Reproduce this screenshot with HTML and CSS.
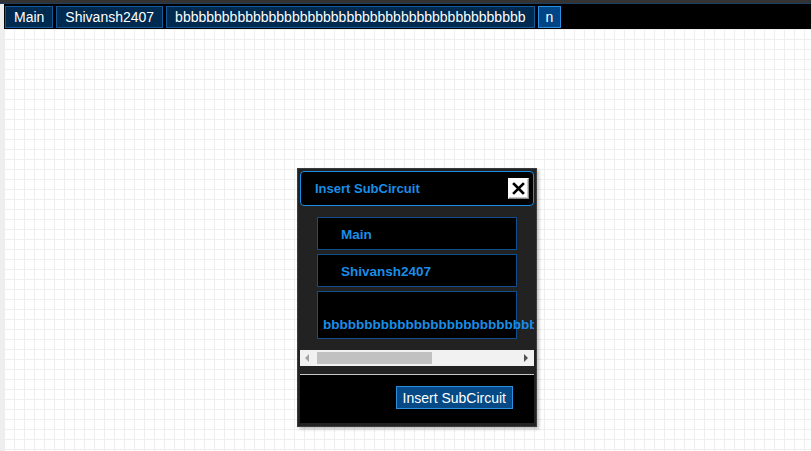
FILE: index.html
```html
<!DOCTYPE html>
<html lang="en">
<head>
  <meta charset="UTF-8" />
  <title>Insert SubCircuit</title>
  <link rel="stylesheet" href="styles.css">
</head>
<body>
  <div class="topline"></div>
  <div class="workspace">
    <div class="tabbar">
      <div class="tab">Main</div>
      <div class="tab">Shivansh2407</div>
      <div class="tab">bbbbbbbbbbbbbbbbbbbbbbbbbbbbbbbbbbbbbbbbbbbbb</div>
      <div class="tab tab-new">n</div>
    </div>
    <div class="canvas"></div>
  </div>

  <div class="dialog">
    <div class="dialog-header">
      <span class="dialog-title">Insert SubCircuit</span>
      <button class="close-btn" type="button">
        <svg width="13" height="13" viewBox="0 0 13 13">
          <path d="M2 2 L11 11 M11 2 L2 11" stroke="#000" stroke-width="2.6" stroke-linecap="square"/>
        </svg>
      </button>
    </div>
    <div class="dialog-body">
      <div class="circuit-list">
        <div class="circuit-item">Main</div>
        <div class="circuit-item">Shivansh2407</div>
        <div class="circuit-item circuit-item-long">bbbbbbbbbbbbbbbbbbbbbbbbbbbbbbbbbbbbbbbbbbbbb</div>
      </div>
    </div>
    <div class="hscroll">
      <span class="arrow arrow-left"></span>
      <span class="thumb"></span>
      <span class="arrow arrow-right"></span>
    </div>
    <div class="dialog-footer">
      <button class="insert-btn" type="button">Insert SubCircuit</button>
    </div>
  </div>
</body>
</html>
```

FILE: styles.css
```css
:root {
  --tab-bg: #002a50;
  --tab-border: #14599a;
  --accent: #1a8ee6;
  --accent-dark: #0e4f8f;
  --panel: #222;
}

html, body {
  margin: 0;
  height: 100%;
  overflow: hidden;
}

body {
  font-family: "Liberation Sans", Arial, sans-serif;
  background-color: #eee;
}

.topline {
  height: 3px;
  background-color: #333;
  border-bottom: 1px solid #1f3d5c;
}

.workspace {
  padding-left: 4px;
}

.tabbar {
  display: flex;
  gap: 3px;
  height: 25px;
  padding: 2px 0 0 1px;
  box-sizing: border-box;
  background-color: #000;
  overflow: hidden;
}

.tab {
  height: 22px;
  line-height: 20px;
  padding: 0 8px;
  box-sizing: border-box;
  background-color: var(--tab-bg);
  border: 1px solid var(--tab-border);
  color: #fff;
  font-size: 14px;
  white-space: nowrap;
}

.tab-new {
  padding: 0 7px;
  background-color: #004585;
  border-color: #2a8fe0;
}

.canvas {
  height: 430px;
  background-color: #fff;
  background-image:
    linear-gradient(to right, #eee 1px, transparent 1px),
    linear-gradient(to bottom, #eee 1px, transparent 1px);
  background-size: 10px 10px;
}

/* dialog */
.dialog {
  position: absolute;
  left: 297px;
  top: 168px;
  width: 234px;
  padding: 2px 2px 3px;
  background-color: var(--panel);
  border: 1px solid #3c3c3c;
  box-shadow: 2px 2px 3px rgba(0, 0, 0, 0.25);
}

.dialog-header {
  display: flex;
  align-items: center;
  justify-content: space-between;
  height: 35px;
  padding: 0 4px 0 14px;
  box-sizing: border-box;
  background-color: #000;
  border: 1px solid var(--accent);
  border-radius: 4px;
}

.dialog-title {
  color: var(--accent);
  font-size: 13px;
  font-weight: bold;
}

.close-btn {
  display: flex;
  align-items: center;
  justify-content: center;
  width: 21px;
  height: 21px;
  padding: 0;
  background-color: #fff;
  border: 1px solid;
  border-color: #fff #888 #888 #fff;
  box-shadow: inset -1px -1px 0 #ccc;
}

.dialog-body {
  height: 144px;
  padding-top: 11px;
  box-sizing: border-box;
  overflow: hidden;
}

.circuit-list {
  display: flex;
  flex-direction: column;
  gap: 4px;
  margin-left: 17px;
  width: 200px;
}

.circuit-item {
  height: 33px;
  line-height: 34px;
  padding-left: 23px;
  box-sizing: border-box;
  background-color: #000;
  border: 1px solid var(--accent-dark);
  color: var(--accent);
  font-size: 13.5px;
  font-weight: bold;
  white-space: nowrap;
}

.circuit-item-long {
  height: 48px;
  line-height: 16px;
  padding: 25px 0 0 5px;
}

.hscroll {
  display: flex;
  align-items: center;
  height: 16px;
  background-color: #f1f1f1;
}

.arrow {
  width: 0;
  height: 0;
  border-top: 4px solid transparent;
  border-bottom: 4px solid transparent;
}

.arrow-left {
  margin-left: 5px;
  border-right: 4px solid #a3a3a3;
}

.arrow-right {
  margin-left: auto;
  margin-right: 6px;
  border-left: 4px solid #505050;
}

.thumb {
  width: 115px;
  height: 12px;
  margin-left: 8px;
  background-color: #c1c1c1;
}

.dialog-footer {
  display: flex;
  justify-content: flex-end;
  height: 49px;
  margin-top: 8px;
  padding: 11px 21px 0 0;
  box-sizing: border-box;
  background-color: #000;
  border-top: 1px solid #c8c8c8;
}

.insert-btn {
  height: 23px;
  padding: 0 6px;
  background-color: #054a86;
  border: 1px solid #2a8fe0;
  color: #fff;
  font-family: "Liberation Sans", Arial, sans-serif;
  font-size: 14px;
}
```
